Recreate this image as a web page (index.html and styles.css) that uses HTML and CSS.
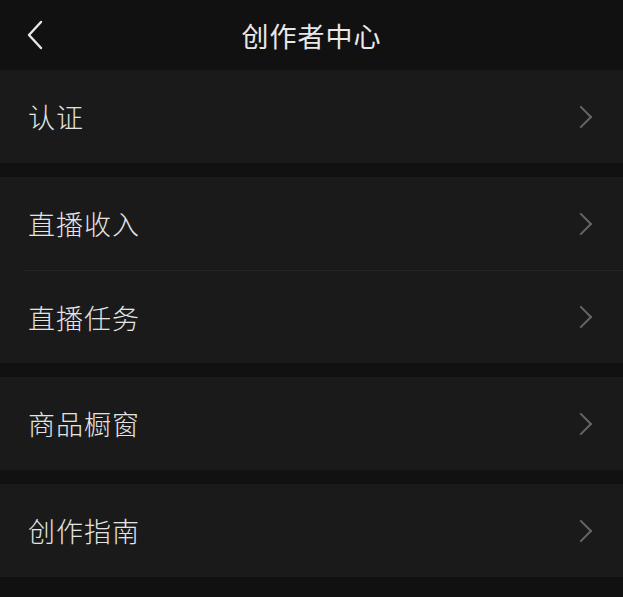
FILE: index.html
```html
<!DOCTYPE html>
<html lang="zh-CN">
<head>
    <meta charset="UTF-8">
    <meta name="viewport" content="width=device-width, initial-scale=1.0">
    <title>创作者中心</title>
    <link rel="stylesheet" href="styles.css">
</head>
<body>
<div class="header">
    <svg class="back" width="20" height="32" viewBox="0 0 20 32">
        <path d="M16 3 L4 16 L16 29" fill="none" stroke="#e8e8e8" stroke-width="2.4" stroke-linecap="round" stroke-linejoin="round"/>
    </svg>
    <h1 class="title">创作者中心</h1>
</div>

<div class="group">
    <div class="row"><span>认证</span><i class="arrow"></i></div>
</div>

<div class="group">
    <div class="row"><span>直播收入</span><i class="arrow"></i></div>
    <div class="row line"><span>直播任务</span><i class="arrow"></i></div>
</div>

<div class="group">
    <div class="row"><span>商品橱窗</span><i class="arrow"></i></div>
</div>

<div class="group">
    <div class="row"><span>创作指南</span><i class="arrow"></i></div>
</div>
</body>
</html>
```

FILE: styles.css
```css
body {
    margin: 0;
    background: #111111;
    font-family: "Noto Sans CJK SC", "Noto Sans", sans-serif;
    color: #e4e4e4;
}

.header {
    height: 70px;
    display: flex;
    align-items: center;
    justify-content: center;
    position: relative;
    background: #111111;
}

.back {
    position: absolute;
    left: 25px;
    top: 19px;
}

.title {
    margin: 0;
    font-size: 27px;
    font-weight: 400;
    color: #e8e8e8;
    letter-spacing: 1px;
}

.group {
    background: #1a1a1a;
    margin-bottom: 14px;
}

.row {
    box-sizing: border-box;
    height: 93px;
    display: flex;
    align-items: center;
    justify-content: space-between;
    padding: 0 30px 0 28px;
    font-size: 27px;
    font-weight: 300;
    letter-spacing: 1px;
}

.line {
    border-top: 1px solid #252525;
    margin-left: 23px;
    padding-left: 5px;
}

.arrow {
    width: 14px;
    height: 14px;
    border-top: 2px solid #666666;
    border-right: 2px solid #666666;
    transform: rotate(45deg);
    margin-right: 4px;
}
```
